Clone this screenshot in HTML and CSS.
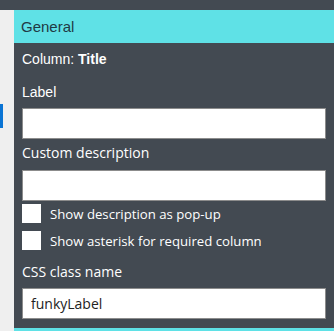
FILE: index.html
```html
<!DOCTYPE html>
<html lang="en">
<head>
  <meta charset="UTF-8">
  <title>Column settings</title>
  <link rel="stylesheet" href="styles.css">
</head>
<body>
  <div class="topbar"></div>
  <div class="layout">
    <div class="sidebar">
      <div class="active-mark"></div>
    </div>
    <div class="panel">
      <div class="panel-header">General</div>
      <div class="panel-body">
        <div class="column-name">Column: <b>Title</b></div>
        <label class="field-label label-first">Label</label>
        <input type="text" class="field-input">
        <label class="field-label">Custom description</label>
        <input type="text" class="field-input">
        <label class="check-row"><span class="check-box"></span>Show description as pop-up</label>
        <label class="check-row"><span class="check-box"></span>Show asterisk for required column</label>
        <label class="field-label css-label">CSS class name</label>
        <input type="text" class="field-input" value="funkyLabel">
      </div>
      <div class="panel-footer"></div>
    </div>
  </div>
</body>
</html>
```

FILE: styles.css
```css
body {
  margin: 0;
  background-color: #f0f0f0;
  font-family: "Open Sans", "Noto Sans", sans-serif;
  overflow: hidden;
}
.topbar {
  height: 10px;
  background-color: #434a52;
}
.layout {
  display: flex;
  height: 321px;
}
.sidebar {
  width: 14px;
  background-color: #efefef;
  padding-top: 94px;
  box-sizing: border-box;
}
.active-mark {
  width: 3px;
  height: 24px;
  background-color: #0a74d4;
}
.panel {
  flex: 1;
  background-color: #434a52;
  display: flex;
  flex-direction: column;
}
.panel-header {
  height: 33px;
  background-color: #5fe1e6;
  color: #1f3a44;
  font-family: "Liberation Sans", Arial, sans-serif;
  font-size: 15px;
  line-height: 33px;
  padding-left: 7px;
}
.panel-body {
  flex: 1;
  padding: 0 8px;
  display: flex;
  flex-direction: column;
  color: #ffffff;
}
.column-name {
  font-family: "Liberation Sans", Arial, sans-serif;
  font-size: 14px;
  line-height: 18px;
  margin-top: 7px;
}
.field-label {
  font-size: 14px;
  line-height: 20px;
  margin: 4px 0 7px;
}
.field-label.label-first {
  font-family: "Liberation Sans", Arial, sans-serif;
  margin: 14px 0 6px;
}
.field-input {
  box-sizing: border-box;
  width: 304px;
  height: 31px;
  margin: 0;
  border: 1px solid #8c8c8c;
  background-color: #fff;
  font-family: "Open Sans", sans-serif;
  font-size: 14px;
  padding: 0 8px;
  color: #222;
  outline: none;
}
.check-row {
  display: flex;
  align-items: center;
  gap: 9px;
  font-size: 13.2px;
  height: 19px;
  margin-top: 3px;
}
.check-row + .check-row {
  margin-top: 8px;
}
.check-box {
  width: 19px;
  height: 19px;
  background-color: #fff;
}
.css-label {
  margin: 12px 0 6px;
}
.panel-footer {
  height: 3px;
  background-color: #5fe1e6;
}
```
